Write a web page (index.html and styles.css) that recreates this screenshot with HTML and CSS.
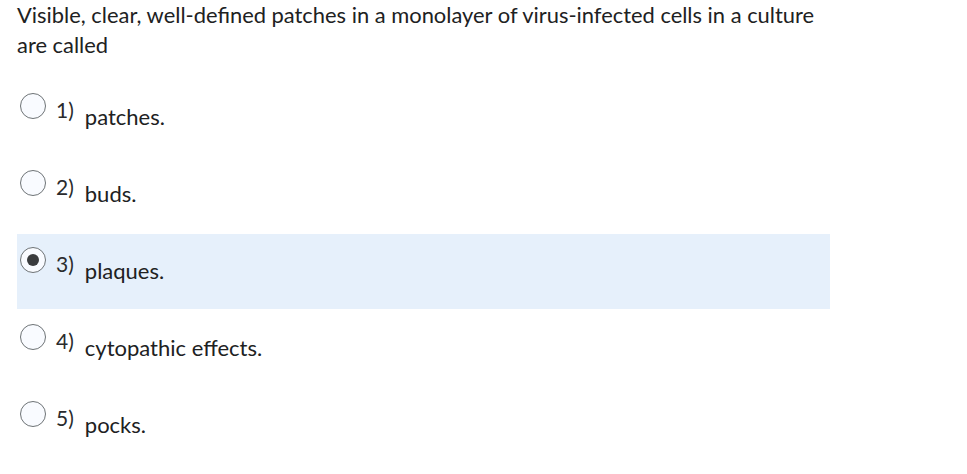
FILE: index.html
```html
<!DOCTYPE html>
<html>
<head>
<meta charset="utf-8">
<link rel="stylesheet" href="styles.css">
</head>
<body>
<div class="question">
  <p class="stem">Visible, clear, well-defined patches in a monolayer of virus-infected cells in a culture are called</p>
  <div class="options">
    <div class="option">
      <span class="radio"></span>
      <span class="num">1)</span>
      <span class="text">patches.</span>
    </div>
    <div class="option">
      <span class="radio"></span>
      <span class="num">2)</span>
      <span class="text">buds.</span>
    </div>
    <div class="option selected">
      <span class="radio checked"></span>
      <span class="num">3)</span>
      <span class="text">plaques.</span>
    </div>
    <div class="option">
      <span class="radio"></span>
      <span class="num">4)</span>
      <span class="text">cytopathic effects.</span>
    </div>
    <div class="option">
      <span class="radio"></span>
      <span class="num">5)</span>
      <span class="text">pocks.</span>
    </div>
  </div>
</div>
</body>
</html>
```

FILE: styles.css
```css
html, body {
  margin: 0;
  padding: 0;
  background: #ffffff;
}
body {
  font-family: Lato, "Liberation Sans", sans-serif;
  color: #202122;
}
.question {
  padding-left: 17px;
  width: 813px;
}
.stem {
  margin: 0;
  font-size: 21.9px;
  line-height: 30px;
}
.options {
  margin-top: 20px;
  display: flex;
  flex-direction: column;
  gap: 2px;
}
.option {
  height: 75px;
  display: flex;
  align-items: flex-start;
}
.option.selected {
  background: #e6f0fb;
}
.radio {
  box-sizing: border-box;
  width: 26px;
  height: 26px;
  margin-top: 13px;
  margin-left: 3px;
  border: 1px solid #6e7376;
  border-radius: 50%;
  background: #f9fbff;
  position: relative;
  flex: none;
}
.radio.checked::after {
  content: "";
  position: absolute;
  left: 6px;
  top: 6px;
  width: 12px;
  height: 12px;
  border-radius: 50%;
  background: #3a3c3e;
}
.num {
  margin-left: 10px;
  margin-top: 20px;
  font-size: 21px;
  line-height: 20px;
  font-weight: 400;
  color: #2a2b2d;
}
.text {
  margin-left: 11px;
  margin-top: 27px;
  font-size: 22px;
  line-height: 20px;
}
```
